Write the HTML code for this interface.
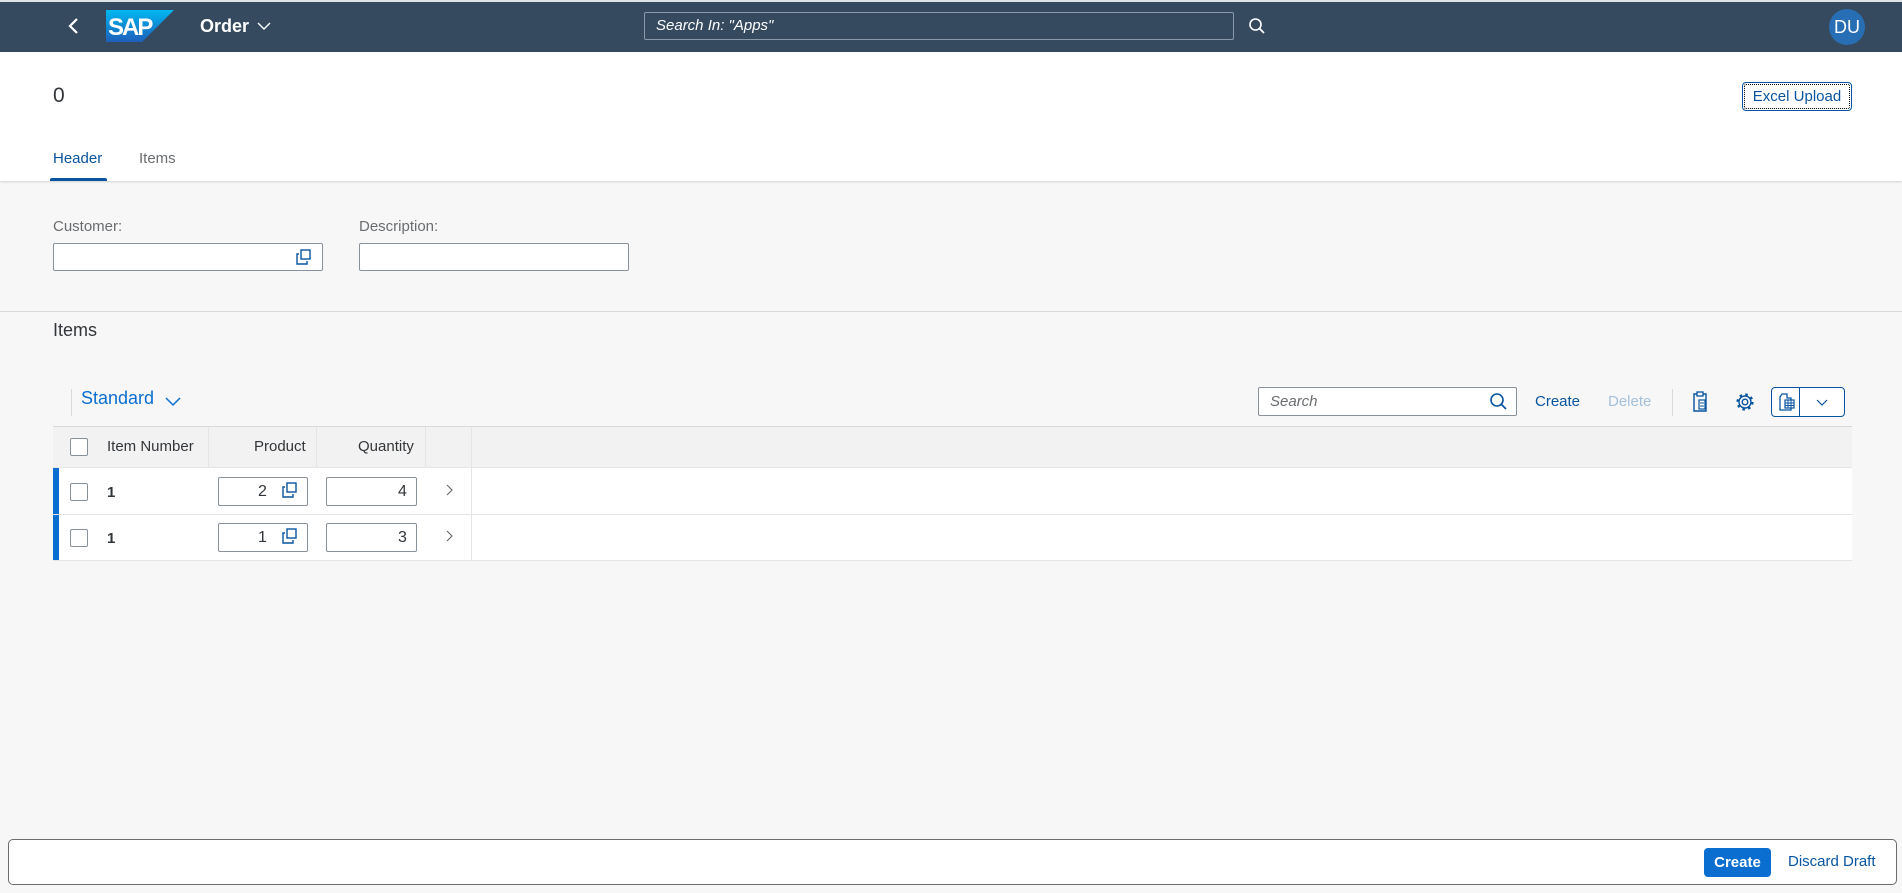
<!DOCTYPE html>
<html><head><meta charset="utf-8"><style>
*{box-sizing:border-box;margin:0;padding:0}
body{width:1902px;height:893px;overflow:hidden;background:#f7f7f7;font-family:"Liberation Sans",sans-serif;color:#32363a;position:relative;font-size:15px}
.a{position:absolute}
.inp{position:absolute;background:#fff;border:1px solid #89919a;border-radius:2px}
.blue{color:#0a6ed1}
.dk{color:#0854a0}
</style></head><body>
<div class="a" style="left:0;top:0;width:1902px;height:52px;background:#354a5f;border-top:2px solid #dfe3e8"></div>
<svg class="a" style="left:66px;top:16px" width="16" height="20"><path d="M11 3 L4 10 L11 17" stroke="#fff" stroke-width="2.2" fill="none"/></svg>
<svg class="a" style="left:106px;top:10px" width="68" height="32"><defs><linearGradient id="g" x1="0" y1="0" x2="0" y2="1"><stop offset="0" stop-color="#00b8f1"/><stop offset="1" stop-color="#1e5fbb"/></linearGradient></defs><path d="M0 0H68L36 32H0Z" fill="url(#g)"/><text x="2" y="25" font-family="Liberation Sans" font-weight="bold" font-size="24" fill="#fff" letter-spacing="-2">SAP</text></svg>
<div class="a" style="left:200px;top:16px;color:#fff;font-weight:bold;font-size:18px">Order</div>
<svg class="a" style="left:256px;top:20px" width="16" height="12"><path d="M2 3L8 9L14 3" stroke="#fff" stroke-width="1.4" fill="none"/></svg>
<div class="a" style="left:644px;top:12px;width:590px;height:28px;border:1px solid #8a9aab;border-radius:2px;background:#354a5f"></div>
<div class="a" style="left:656px;top:17px;color:#fff;font-style:italic;font-size:15px">Search In: "Apps"</div>
<svg class="a" style="left:1248px;top:17px" width="18" height="18"><circle cx="7.5" cy="7.5" r="5.5" stroke="#fff" stroke-width="1.6" fill="none"/><path d="M11.5 11.5L16 16" stroke="#fff" stroke-width="1.8"/></svg>
<div class="a" style="left:1829px;top:9px;width:36px;height:36px;border-radius:50%;background:#286eb4;color:#fff;font-size:18px;text-align:center;line-height:36px">DU</div>

<div class="a" style="left:0;top:52px;width:1902px;height:129px;background:#fff;box-shadow:0 1px 2px rgba(0,0,0,.15)"></div>
<div class="a" style="left:53px;top:84px;font-size:21px">0</div>
<div class="a dk" style="left:1742px;top:82px;width:110px;height:29px;border:1px solid #0854a0;border-radius:4px;outline:1px dotted #000;outline-offset:-3px;font-size:15px;text-align:center;line-height:27px;background:#fff">Excel Upload</div>
<div class="a dk" style="left:53px;top:150px;font-size:15px">Header</div>
<div class="a" style="left:139px;top:150px;font-size:15px;color:#6a6d70">Items</div>
<div class="a" style="left:50px;top:178px;width:57px;height:3px;background:#0854a0;border-radius:2px 2px 0 0"></div>

<div class="a" style="left:53px;top:218px;color:#6a6d70;font-size:15px">Customer:</div>
<div class="inp" style="left:53px;top:243px;width:270px;height:28px"></div>
<svg class="a" style="left:296px;top:249px" width="16" height="16"><rect x="5" y="1" width="9" height="9" stroke="#0854a0" stroke-width="1.4" fill="none"/><path d="M3 5H1V15H11V12" stroke="#0854a0" stroke-width="1.4" fill="none"/></svg>
<div class="a" style="left:359px;top:218px;color:#6a6d70;font-size:15px">Description:</div>
<div class="inp" style="left:359px;top:243px;width:270px;height:28px"></div>
<div class="a" style="left:0;top:311px;width:1902px;height:1px;background:#d9d9d9"></div>
<div class="a" style="left:53px;top:320px;font-size:18px">Items</div>

<div class="a" style="left:71px;top:389px;width:1px;height:27px;background:#d9d9d9"></div>
<div class="a blue" style="left:81px;top:388px;font-size:18px">Standard</div>
<svg class="a" style="left:164px;top:394px" width="18" height="14"><path d="M2 4L9 11L16 4" stroke="#0a6ed1" stroke-width="1.5" fill="none"/></svg>
<div class="inp" style="left:1258px;top:387px;width:259px;height:29px"></div>
<div class="a" style="left:1270px;top:393px;color:#6a6d70;font-style:italic;font-size:15px">Search</div>
<svg class="a" style="left:1489px;top:392px" width="20" height="20"><circle cx="8" cy="8" r="6" stroke="#0854a0" stroke-width="1.6" fill="none"/><path d="M12.5 12.5L17 17" stroke="#0854a0" stroke-width="1.8"/></svg>
<div class="a dk" style="left:1535px;top:393px;font-size:15px">Create</div>
<div class="a" style="left:1608px;top:393px;font-size:15px;color:#a5c0db">Delete</div>
<div class="a" style="left:1672px;top:389px;width:1px;height:27px;background:#d9d9d9"></div>
<svg class="a" style="left:1690px;top:391px" width="20" height="22"><path d="M7 3H4V20H16V3H13" stroke="#0854a0" stroke-width="1.4" fill="none"/><rect x="7" y="1" width="6" height="4" stroke="#0854a0" stroke-width="1.3" fill="none"/><rect x="9" y="9" width="6" height="9" stroke="#0854a0" stroke-width="1.2" fill="#fff"/><path d="M10 12H14M10 15H14" stroke="#0854a0"/></svg>
<svg class="a" style="left:1735px;top:392px" width="20" height="20"><circle cx="10" cy="10" r="2.8" stroke="#0854a0" stroke-width="1.4" fill="none"/><circle cx="10" cy="10" r="6" stroke="#0854a0" stroke-width="1.4" fill="none"/><circle cx="10" cy="10" r="7.5" stroke="#0854a0" stroke-width="2.2" stroke-dasharray="2.5 3.4" fill="none"/></svg>
<div class="a" style="left:1771px;top:387px;width:74px;height:30px;border:1px solid #0854a0;border-radius:4px;background:#fff"></div>
<div class="a" style="left:1799px;top:388px;width:1px;height:28px;background:#0854a0"></div>
<svg class="a" style="left:1776px;top:392px" width="22" height="20"><path d="M6 2H11V6H15V18H4V5Z" stroke="#0854a0" stroke-width="1.3" fill="none"/><rect x="9" y="8" width="9" height="8" fill="#fff" stroke="#0854a0" stroke-width="1.2"/><path d="M9 11H18M9 13.5H18M12 8V16M15 8V16" stroke="#0854a0"/></svg>
<svg class="a" style="left:1814px;top:396px" width="16" height="12"><path d="M3 4L8 9L13 4" stroke="#0854a0" stroke-width="1.2" fill="none"/></svg>

<div class="a" style="left:53px;top:426px;width:1799px;height:1px;background:#d9d9d9"></div>
<div class="a" style="left:53px;top:427px;width:1799px;height:41px;background:#f2f2f2;border-bottom:1px solid #e5e5e5"></div>
<div class="a" style="left:53px;top:468px;width:1799px;height:92px;background:#fff"></div>
<div class="a" style="left:53px;top:514px;width:1799px;height:1px;background:#e5e5e5"></div>
<div class="a" style="left:53px;top:560px;width:1799px;height:1px;background:#e5e5e5"></div>
<div class="a" style="left:208px;top:427px;width:1px;height:41px;background:#e5e5e5"></div>
<div class="a" style="left:316px;top:427px;width:1px;height:41px;background:#e5e5e5"></div>
<div class="a" style="left:425px;top:427px;width:1px;height:41px;background:#e5e5e5"></div>
<div class="a" style="left:471px;top:427px;width:1px;height:134px;background:#e5e5e5"></div>
<div class="a" style="left:53px;top:468px;width:6px;height:46px;background:#0a6ed1"></div>
<div class="a" style="left:53px;top:515px;width:6px;height:45px;background:#0a6ed1"></div>

<div class="a" style="left:70px;top:438px;width:18px;height:18px;border:1px solid #89919a;border-radius:2px;background:#fff"></div>
<div class="a" style="left:107px;top:438px;font-size:15px">Item Number</div>
<div class="a" style="left:254px;top:438px;font-size:15px">Product</div>
<div class="a" style="left:358px;top:438px;font-size:15px">Quantity</div>

<div class="a" style="left:70px;top:483px;width:18px;height:18px;border:1px solid #89919a;border-radius:2px;background:#fff"></div>
<div class="a" style="left:107px;top:484px;font-size:15px;font-weight:bold">1</div>
<div class="inp" style="left:218px;top:477px;width:90px;height:29px"></div>
<div class="a" style="left:258px;top:483px;font-size:16px">2</div>
<svg class="a" style="left:282px;top:482px" width="16" height="16"><rect x="5" y="1" width="9" height="9" stroke="#0854a0" stroke-width="1.4" fill="none"/><path d="M3 5H1V15H11V12" stroke="#0854a0" stroke-width="1.4" fill="none"/></svg>
<div class="inp" style="left:326px;top:477px;width:91px;height:29px"></div>
<div class="a" style="left:398px;top:483px;font-size:16px">4</div>
<svg class="a" style="left:444px;top:483px" width="10" height="14"><path d="M3 2L8 7L3 12" stroke="#6a6d70" stroke-width="1.2" fill="none"/></svg>

<div class="a" style="left:70px;top:529px;width:18px;height:18px;border:1px solid #89919a;border-radius:2px;background:#fff"></div>
<div class="a" style="left:107px;top:530px;font-size:15px;font-weight:bold">1</div>
<div class="inp" style="left:218px;top:523px;width:90px;height:29px"></div>
<div class="a" style="left:258px;top:529px;font-size:16px">1</div>
<svg class="a" style="left:282px;top:528px" width="16" height="16"><rect x="5" y="1" width="9" height="9" stroke="#0854a0" stroke-width="1.4" fill="none"/><path d="M3 5H1V15H11V12" stroke="#0854a0" stroke-width="1.4" fill="none"/></svg>
<div class="inp" style="left:326px;top:523px;width:91px;height:29px"></div>
<div class="a" style="left:398px;top:529px;font-size:16px">3</div>
<svg class="a" style="left:444px;top:529px" width="10" height="14"><path d="M3 2L8 7L3 12" stroke="#6a6d70" stroke-width="1.2" fill="none"/></svg>

<div class="a" style="left:8px;top:839px;width:1889px;height:46px;background:#fff;border:1px solid #6a6d70;border-radius:5px"></div>
<div class="a" style="left:1704px;top:848px;width:67px;height:29px;background:#0a6ed1;border-radius:4px;color:#fff;font-weight:bold;font-size:15px;text-align:center;line-height:29px">Create</div>
<div class="a dk" style="left:1788px;top:853px;font-size:15px">Discard Draft</div>
</body></html>
